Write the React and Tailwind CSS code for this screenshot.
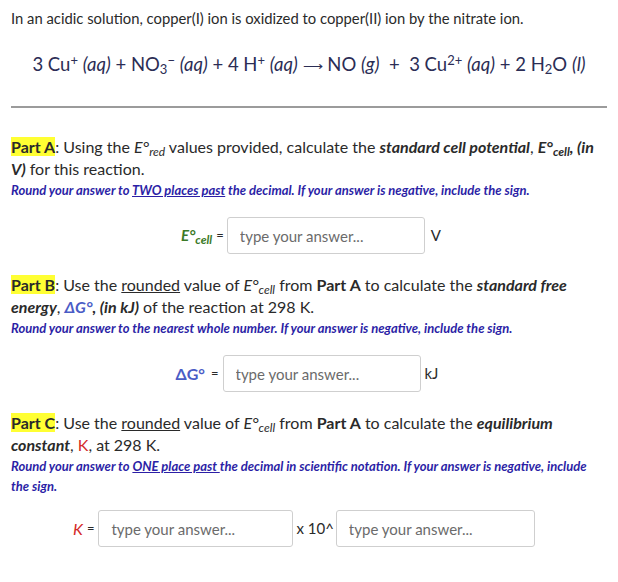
import React from "react";

const Hl = ({ children }) => (
  <span className="bg-[#ffff33] font-bold">{children}</span>
);

const Answer = ({ w = "w-[198px]" }) => (
  <input
    type="text"
    placeholder="type your answer..."
    className={`${w} h-[37px] shrink-0 rounded-[3px] border border-[#cfcfcf] bg-white px-[12px] text-[15px] text-[#555] placeholder:text-[#6b6b6b] outline-none`}
  />
);

const App = () => {
  return (
    <div className="min-h-[582px] w-[618px] bg-white px-[11px] font-['Lato','Noto_Sans',sans-serif] text-[#2a2a2a]">
      <p className="pt-[8px] text-[14.8px] leading-[20px]">
        In an acidic solution, copper(I) ion is oxidized to copper(II) ion by the nitrate ion.
      </p>

      <p className="mt-[23px] text-center text-[18.5px] leading-[26px] text-[#2b2d55]">
        3 Cu<sup className="text-[13px]">+</sup> <i>(aq)</i> + NO<sub className="text-[13px]">3</sub>
        <sup className="text-[13px]">−</sup> <i>(aq)</i> + 4 H<sup className="text-[13px]">+</sup>{" "}
        <i>(aq)</i> <span className="text-[14px]">⟶</span> NO <i>(g)</i> &nbsp;+&nbsp; 3 Cu
        <sup className="text-[13px]">2+</sup> <i>(aq)</i> + 2 H<sub className="text-[13px]">2</sub>O{" "}
        <i>(l)</i>
      </p>

      <hr className="mt-[27px] border-t-2 border-[#9b9b9b]" />

      {/* Part A */}
      <div className="mt-[28px]">
        <p className="text-[16px] leading-[22px]">
          <Hl>Part A</Hl>: Using the <i>E°</i>
          <sub className="text-[12px]">
            <i>red</i>
          </sub>{" "}
          values provided, calculate the <b><i>standard cell potential</i></b>,{" "}
          <b>
            <i>
              E°<sub className="text-[12px]">cell</sub>, (in V)
            </i>
          </b>{" "}
          for this reaction.
        </p>
        <p className="text-[13px] font-bold italic leading-[20px] text-[#2c1fa6]">
          Round your answer to <u>TWO places past</u> the decimal. If your answer is negative, include the sign.
        </p>
        <div className="mt-[17px] flex items-center justify-center pl-[4px]">
          <span className="mr-[4px] text-[15px] font-bold italic text-[#3b7a27]">
            E°<sub className="text-[12px]">cell</sub>
          </span>
          <span className="mr-[3px] text-[13px]">=</span>
          <Answer />
          <span className="ml-[6px] text-[15px]">V</span>
        </div>
      </div>

      {/* Part B */}
      <div className="mt-[20px]">
        <p className="text-[16px] leading-[22px]">
          <Hl>Part B</Hl>: Use the <u>rounded</u> value of <i>E°</i>
          <sub className="text-[12px]">
            <i>cell</i>
          </sub>{" "}
          from <b>Part A</b> to calculate the <b><i>standard free energy</i></b>,{" "}
          <b>
            <i>
              <span className="text-[#4a5cc6]">ΔG°</span>, (in kJ)
            </i>
          </b>{" "}
          of the reaction at 298 K.
        </p>
        <p className="text-[13px] font-bold italic leading-[20px] text-[#2c1fa6]">
          Round your answer to the nearest whole number. If your answer is negative, include the sign.
        </p>
        <div className="mt-[17px] flex items-center justify-center pr-[4px]">
          <span className="mr-[6px] text-[16px] font-bold text-[#4a5cc6]">ΔG°</span>
          <span className="mr-[4px] text-[13px]">=</span>
          <Answer />
          <span className="ml-[4px] text-[15px]">kJ</span>
        </div>
      </div>

      {/* Part C */}
      <div className="mt-[20px]">
        <p className="text-[16px] leading-[22px]">
          <Hl>Part C</Hl>: Use the <u>rounded</u> value of <i>E°</i>
          <sub className="text-[12px]">
            <i>cell</i>
          </sub>{" "}
          from <b>Part A</b> to calculate the <b><i>equilibrium constant</i></b>,{" "}
          <span className="text-[#d42a2a]">K</span>, at 298 K.
        </p>
        <p className="text-[13px] font-bold italic leading-[20px] text-[#2c1fa6]">
          Round your answer to <u>ONE place past </u>the decimal in scientific notation. If your answer is
          negative, include the sign.
        </p>
        <div className="mt-[14px] flex items-center pl-[62px]">
          <span className="mr-[4px] text-[16px] italic text-[#d42a2a]">K</span>
          <span className="mr-[4px] text-[13px]">=</span>
          <Answer w="w-[195px]" />
          <span className="ml-[3px] mr-[2px] text-[15px]">x 10^</span>
          <Answer w="w-[199px]" />
        </div>
      </div>
    </div>
  );
};

export default App;
